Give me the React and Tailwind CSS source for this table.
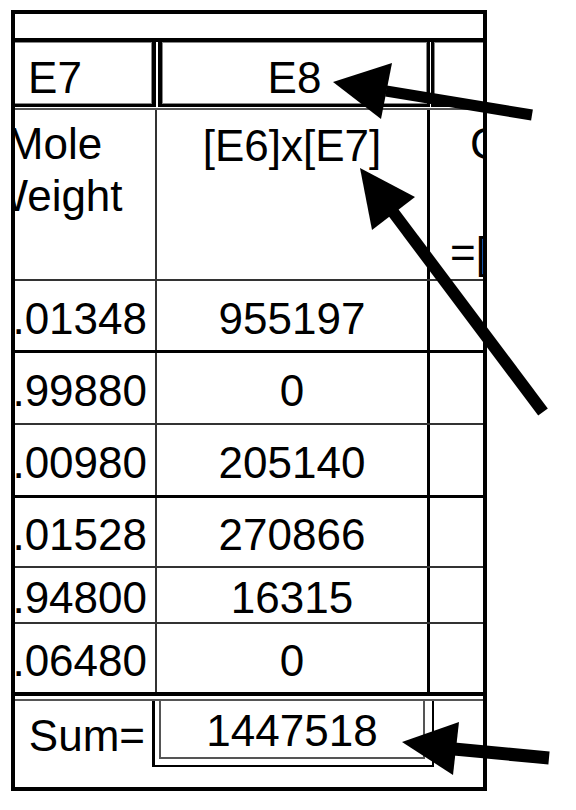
const rows = [
  { mw: "28.01348", mass: "955197", cls: "h-[72px] border-b-[3px] border-black" },
  { mw: "31.99880", mass: "0", cls: "h-[72px] border-b-2 border-[#333]" },
  { mw: "44.00980", mass: "205140", cls: "h-[73px] border-b-[3px] border-black" },
  { mw: "18.01528", mass: "270866", cls: "h-[70px] border-b-2 border-[#333]" },
  { mw: "39.94800", mass: "16315", cls: "h-[56px] border-b-2 border-[#333]" },
  { mw: "64.06480", mass: "0", cls: "h-[72px] border-b-4 border-black" },
];

const Arrows = () => (
  <svg className="absolute left-0 top-0 pointer-events-none" width="576" height="810" viewBox="0 0 576 810">
    <line x1="386" y1="91" x2="532" y2="115" stroke="#000" strokeWidth="11" />
    <polygon points="333,82 392,63 381,119" fill="#000" />
    <line x1="390" y1="208" x2="543" y2="412" stroke="#000" strokeWidth="12" />
    <polygon points="360,168 415,197 372,230" fill="#000" />
    <line x1="454" y1="749" x2="549" y2="758" stroke="#000" strokeWidth="13" />
    <polygon points="402,742 459,722 453,775" fill="#000" />
  </svg>
);

export default function App() {
  return (
    <div className="relative w-[576px] h-[810px] bg-white overflow-hidden font-['Liberation_Sans',Arial,sans-serif] text-[44px] text-black">
      <div className="relative ml-[11px] mt-[10px] w-[476px] h-[781px] border-4 border-black overflow-hidden">
        <div className="ml-[-61px] pt-[24px] w-[700px]">
          {/* column letters */}
          <div className="border-b-2 border-[#555] pb-px">
            <div className="border-t-4 border-black flex h-[69px] leading-none">
              <div className="w-[202px] shrink-0 border-x-4 border-b-[3px] border-black shadow-[inset_0_0_0_1px_#888] flex items-center justify-center pt-[10px]">E7</div>
              <div className="ml-[2px] w-[272px] shrink-0 border-l-4 border-r-[3px] border-b-[3px] border-black shadow-[inset_0_0_0_1px_#888] flex items-center justify-center pt-[10px]">E8</div>
              <div className="ml-px w-[200px] shrink-0 border-l-[3px] border-b-[3px] border-black shadow-[inset_0_0_0_1px_#888]" />
            </div>
          </div>

          {/* titles */}
          <div className="flex h-[171px] border-b-2 border-[#333] leading-[52px]">
            <div className="w-[203px] shrink-0 border-r-2 border-[#333] pt-[8px] text-center">
              <p>Mole</p>
              <p>Weight</p>
            </div>
            <div className="w-[273px] shrink-0 border-r-[3px] border-black pt-[10px] text-center">
              <p>[E6]x[E7]</p>
            </div>
            <div className="w-[200px] shrink-0 flex flex-col justify-between pt-[8px] whitespace-nowrap">
              <p className="pl-[40px]">Conc.</p>
              <p className="pl-[20px]">=[E8]/[E14]</p>
            </div>
          </div>

          {rows.map((r) => (
            <div key={r.mw} className={`flex leading-none ${r.cls}`}>
              <div className="w-[203px] shrink-0 border-r-2 border-[#333] flex items-center justify-end pr-[8px] pt-[6px]">{r.mw}</div>
              <div className="w-[273px] shrink-0 border-r-[3px] border-black flex items-center justify-center pt-[6px]">{r.mass}</div>
              <div className="w-[200px] shrink-0" />
            </div>
          ))}

          {/* total */}
          <div className="mt-[3px] border-t-2 border-[#555]">
            <div className="flex h-[66px] leading-none">
              <div className="w-[198px] shrink-0 flex items-center justify-end pr-[7px] pt-[4px]">Sum=</div>
              <div className="w-[282px] shrink-0 border-l-[3px] border-r-2 border-b-2 border-black pl-[4px] pr-[7px] pb-[6px]">
                <div className="h-full border-x-2 border-b-2 border-[#555] flex items-center justify-center pt-[4px]">1447518</div>
              </div>
            </div>
          </div>
        </div>
      </div>
      <Arrows />
    </div>
  );
}
